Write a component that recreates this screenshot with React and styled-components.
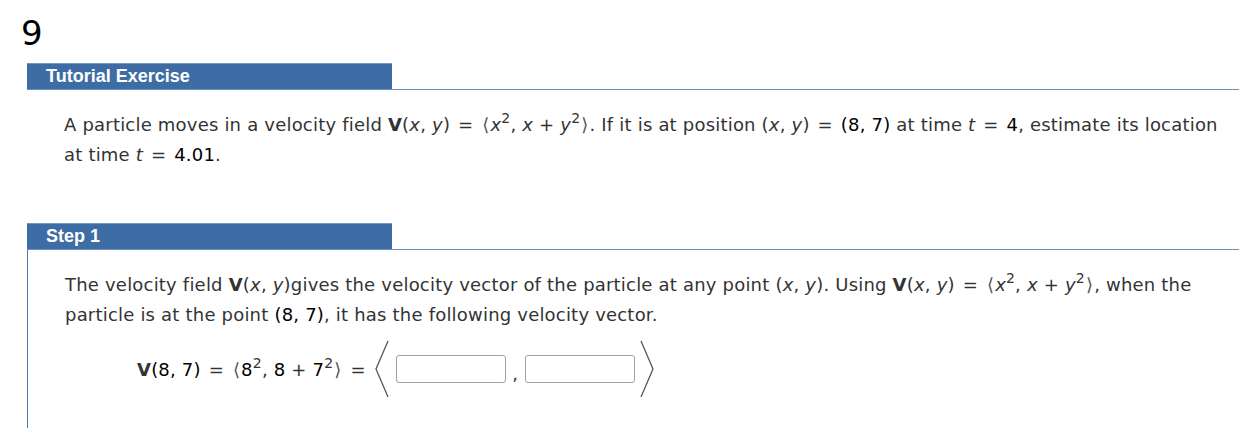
import React from "react";
import styled, { createGlobalStyle } from "styled-components";

const Global = createGlobalStyle`
  html, body { margin: 0; padding: 0; background: #fff; }
  body { font-family: "DejaVu Sans", Verdana, sans-serif; color: #333; }
`;

const Page = styled.div`
  width: 1244px;
  height: 428px;
  overflow: hidden;
  padding-top: 13px;
  box-sizing: border-box;
`;

const Number = styled.div`
  font-family: "DejaVu Sans", Verdana, sans-serif;
  font-size: 34px;
  line-height: 40px;
  color: #000;
  padding-left: 21px;
  margin-bottom: 10px;
`;

const Section = styled.section`
  margin-left: 27px;
  margin-right: 5px;
  margin-top: ${(p) => p.$mt || 0}px;
  border-left: ${(p) => (p.$bordered ? "1px solid #4d7ab2" : "none")};
  padding-bottom: ${(p) => p.$pb || 0}px;
`;

const HeaderRow = styled.div`
  display: flex;
  border-bottom: 1px solid #6b90c2;
  margin-left: ${(p) => (p.$bordered ? "-1px" : "0")};
`;

const HeaderBar = styled.div`
  width: 365px;
  height: 26px;
  box-sizing: border-box;
  background: #3e6da6;
  border-top: 1px solid #7196c6;
  color: #fff;
  font-family: "Liberation Sans", Arial, sans-serif;
  font-weight: bold;
  font-size: 18px;
  line-height: 24px;
  padding-left: 19px;
`;

const Body = styled.div`
  padding-top: ${(p) => p.$pt}px;
  padding-left: ${(p) => p.$pl}px;
  padding-right: 4px;
`;

const Para = styled.p`
  margin: 0;
  font-size: 18px;
  line-height: 30px;
  letter-spacing: 0.2px;
  color: #333;
`;

const I = styled.i`
  font-style: italic;
`;

const B = styled.b`
  font-weight: bold;
`;

const N = styled.span`
  color: #000;
`;

const Sup = styled.sup`
  font-size: 14px;
  line-height: 0;
  vertical-align: 8px;
`;

const Ang = styled.span`
  color: #555;
  margin: 0 1px;
`;

const Eq = styled.span`
  margin: 0 2px;
`;

const EqRow = styled.div`
  display: flex;
  align-items: center;
  margin-top: 11px;
  padding-left: 72px;
  height: 56px;
  font-size: 18px;
  letter-spacing: 0.2px;
  color: #333;
`;

const EqText = styled.span`
  white-space: pre;
  margin-right: 7px;
`;

const Input = styled.span`
  display: inline-block;
  width: 110px;
  height: 28px;
  box-sizing: border-box;
  border: 1px solid #a0a0a0;
  border-radius: 3px;
  background: #fff;
`;

const Comma = styled.span`
  width: 19px;
  text-align: center;
  margin-top: 8px;
`;

const BracketSvg = styled.svg`
  display: block;
  flex: none;
  margin-left: ${(p) => (p.$right ? 5 : 0)}px;
  margin-right: ${(p) => (p.$right ? 0 : 7)}px;
`;

function Bracket({ right }) {
  return (
    <BracketSvg $right={right} width="14" height="58" viewBox="0 0 14 58">
      <polyline
        points={right ? "1,1 13,29 1,57" : "13,1 1,29 13,57"}
        fill="none"
        stroke="#555"
        strokeWidth="1.3"
      />
    </BracketSvg>
  );
}

export default function App() {
  return (
    <>
      <Global />
      <Page>
        <Number>9</Number>
        <Section>
          <HeaderRow>
            <HeaderBar>Tutorial Exercise</HeaderBar>
          </HeaderRow>
          <Body $pt={20} $pl={37}>
            <Para>
              A particle moves in a velocity field <B>V</B>(<I>x</I>, <I>y</I>) <Eq>=</Eq> <Ang>⟨</Ang><I>x</I><Sup>2</Sup>, <I>x</I> + <I>y</I><Sup>2</Sup><Ang>⟩</Ang>. If it is at position (<I>x</I>, <I>y</I>) <Eq>=</Eq> <N>(8, 7)</N> at time <I>t</I> <Eq>=</Eq> <N>4</N>, estimate its location at time <I>t</I> <Eq>=</Eq> <N>4.01</N>.
            </Para>
          </Body>
        </Section>
        <Section $bordered $mt={53} $pb={40}>
          <HeaderRow $bordered>
            <HeaderBar>Step 1</HeaderBar>
          </HeaderRow>
          <Body $pt={20} $pl={37}>
            <Para>
              The velocity field <B>V</B>(<I>x</I>, <I>y</I>)gives the velocity vector of the particle at any point (<I>x</I>, <I>y</I>). Using <B>V</B>(<I>x</I>, <I>y</I>) <Eq>=</Eq> <Ang>⟨</Ang><I>x</I><Sup>2</Sup>, <I>x</I> + <I>y</I><Sup>2</Sup><Ang>⟩</Ang>, when the particle is at the point <N>(8, 7)</N>, it has the following velocity vector.
            </Para>
            <EqRow>
              <EqText>
                <B>V</B><N>(8, 7)</N> <Eq>=</Eq> <Ang>⟨</Ang><N>8</N><Sup>2</Sup>, <N>8</N> + <N>7</N><Sup>2</Sup><Ang>⟩</Ang> <Eq>=</Eq>
              </EqText>
              <Bracket />
              <Input />
              <Comma>,</Comma>
              <Input />
              <Bracket right />
            </EqRow>
          </Body>
        </Section>
      </Page>
    </>
  );
}
